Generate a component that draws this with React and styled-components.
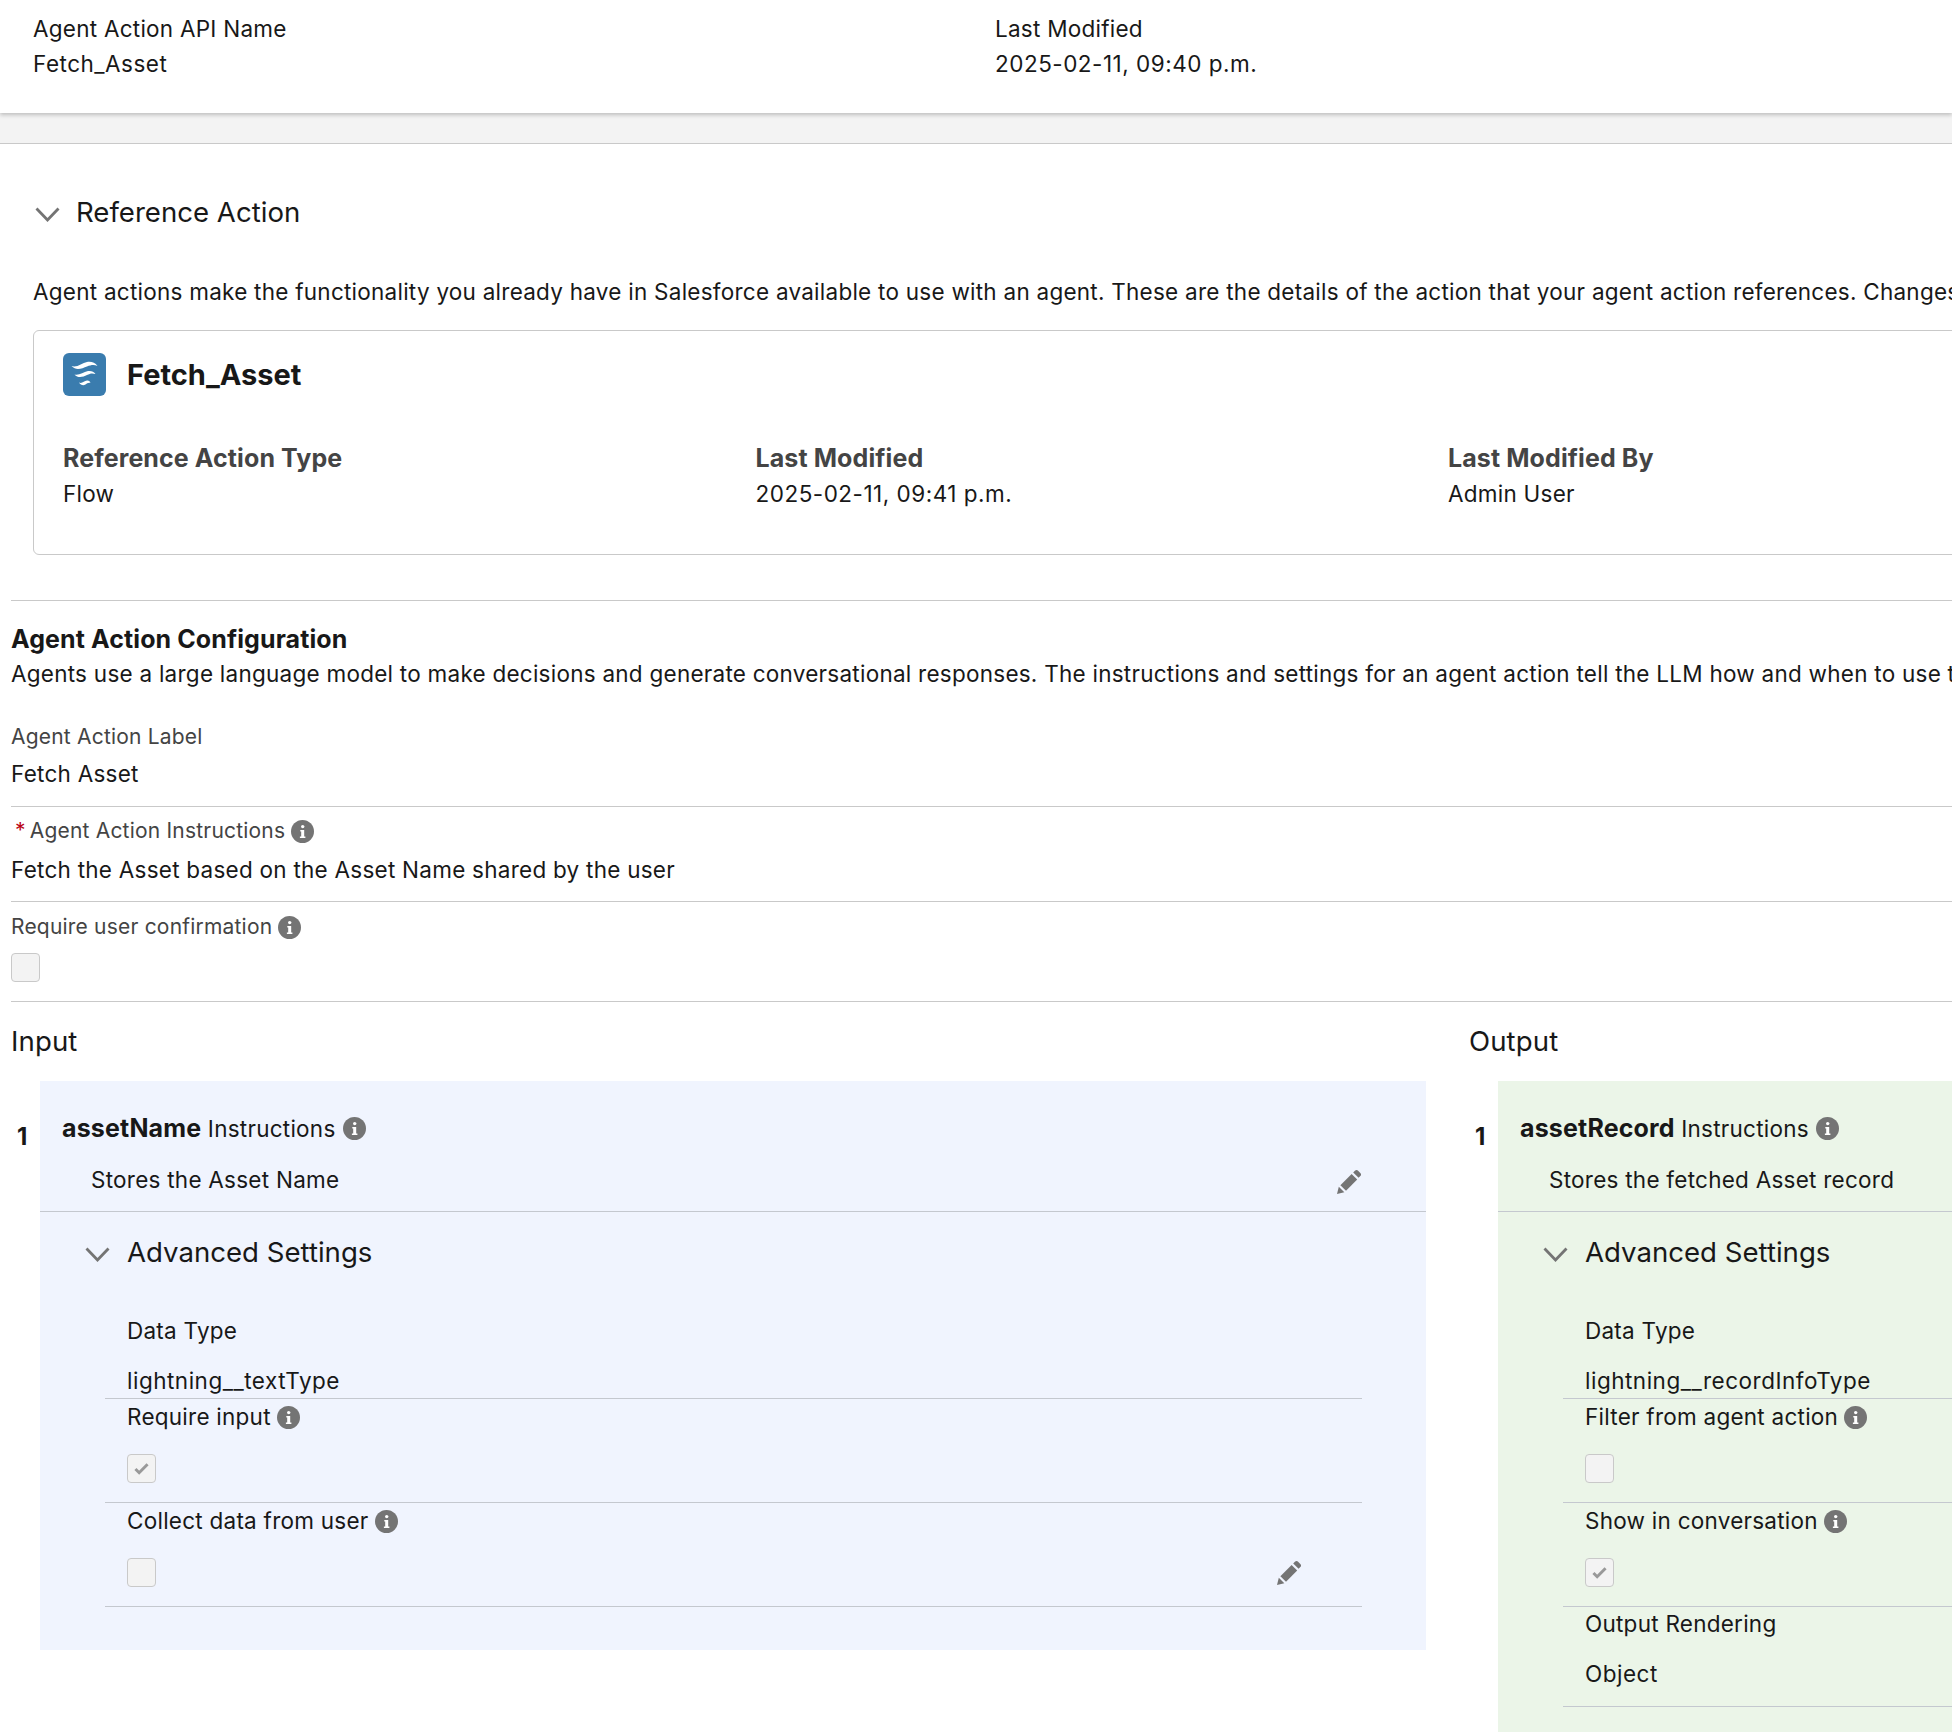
import React from 'react';
import styled, { createGlobalStyle } from 'styled-components';

const GlobalStyle = createGlobalStyle`
    html, body {
        margin: 0;
        padding: 0;
        background: #fff;
    }
    body {
        font-family: Inter, "Liberation Sans", sans-serif;
        font-size: 22.5px;
        letter-spacing: 0.25px;
        line-height: 28px;
        color: #181818;
    }
    * {
        box-sizing: border-box;
    }
`;

const InfoIcon = () => (
    <InfoSvg viewBox="0 0 23 23">
        <circle cx="11.5" cy="11.5" r="11.5" fill="#747474" />
        <circle cx="11.7" cy="6.6" r="1.7" fill="#fff" />
        <path d="M9.3 10h3.9v6.4h1.2v1.6H8.9v-1.6h1.3v-4.8h-.9z" fill="#fff" />
    </InfoSvg>
);

const Chevron = () => (
    <ChevronSvg viewBox="0 0 25 15">
        <path d="M1.5 1.5 12.5 13 23.5 1.5" fill="none" stroke="#747474" strokeWidth="2.8" />
    </ChevronSvg>
);

const Pencil = () => (
    <PencilSvg viewBox="0 0 25 25">
        <path d="M0 25l1.8-7.3 5.5 5.5z" fill="#747474" />
        <path d="M3.4 16.2 14.6 5l5.6 5.6L9 21.8z" fill="#747474" />
        <path d="M16.2 3.4l1.7-1.7c1-1 2.3-1 3.2 0l2.2 2.2c1 1 1 2.2 0 3.2l-1.7 1.7z" fill="#747474" />
    </PencilSvg>
);

const FlowIcon = () => (
    <FlowTile>
        <svg viewBox="0 0 43 43" width="43" height="43">
            <g fill="#fff">
                <path d="M8.5 13C14 15 19 10 24 9c4-.8 8 .5 10.500 4-3.500-1.500-6.500-1-10.500.5-5 2-11 4.500-15.500-.5z" />
                <path d="M11.500 21.500c4.500 1.500 8.500-2.500 13.500-3.500 3-.5 6 .5 7.500 3-3.500-1-5.500-.5-8.500 1-4 2-9 3.500-12.500-.5z" />
                <path d="M16 29.500c3 1.500 5-1.500 8-2 1.500-.2 3 .5 3.500 2.500-2-.5-3.500.5-5.500 1.800-2 1-4.500.2-6-2.300z" />
            </g>
        </svg>
    </FlowTile>
);

const Check = () => (
    <svg viewBox="0 0 29 29" width="27" height="27">
        <path d="M8 15l4 4 9-9" fill="none" stroke="#999" strokeWidth="3.200" />
    </svg>
);

function Settings({ rows }) {
    return (
        <SettingList>
            {rows.map((row) => (
                <SettingRow key={row.label} $top={row.box ? 4 : 3} $bottom={row.bottom}>
                    <SettingLabel>
                        {row.label}
                        {row.info && <InfoIcon />}
                    </SettingLabel>
                    {row.value && <SettingValue $gap={row.gap}>{row.value}</SettingValue>}
                    {row.box && (
                        <BoxLine>
                            <CheckBox>{row.box === 'on' && <Check />}</CheckBox>
                            {row.pencil && <Pencil />}
                        </BoxLine>
                    )}
                </SettingRow>
            ))}
        </SettingList>
    );
}

function ParamPanel({ name, desc, tone, width, height, pencil, rows }) {
    return (
        <Panel $tone={tone} $width={width} $height={height}>
            <PanelHead>
                <ParamTitle>
                    <span>
                        <b>{name}</b> Instructions
                    </span>
                    <InfoIcon />
                </ParamTitle>
                <ParamDesc>
                    {desc}
                    {pencil && <Pencil />}
                </ParamDesc>
            </PanelHead>
            <Advanced>
                <Chevron />
                Advanced Settings
            </Advanced>
            <Settings rows={rows} />
        </Panel>
    );
}

const inputRows = [
    { label: 'Data Type', value: 'lightning__textType', gap: 22, bottom: 3 },
    { label: 'Require input', info: true, box: 'on', bottom: 19 },
    { label: 'Collect data from user', info: true, box: 'off', pencil: true, bottom: 19 },
];

const outputRows = [
    { label: 'Data Type', value: 'lightning__recordInfoType', gap: 22, bottom: 3 },
    { label: 'Filter from agent action', info: true, box: 'off', bottom: 19 },
    { label: 'Show in conversation', info: true, box: 'on', bottom: 19 },
    { label: 'Output Rendering', value: 'Object', gap: 22, bottom: 18 },
];

export default function App() {
    return (
        <Page>
            <GlobalStyle />
            <TopBar>
                <div>
                    <div>Agent Action API Name</div>
                    <TopValue>Fetch_Asset</TopValue>
                </div>
                <div>
                    <div>Last Modified</div>
                    <TopValue>2025-02-11, 09:40 p.m.</TopValue>
                </div>
            </TopBar>
            <Band />

            <ReferenceSection>
                <SectionHead>
                    <Chevron />
                    Reference Action
                </SectionHead>
                <Intro>
                    Agent actions make the functionality you already have in Salesforce available to use with an
                    agent. These are the details of the action that your agent action references. Changes you make
                    to the action can affect your agent.
                </Intro>
                <Card>
                    <CardTitle>
                        <FlowIcon />
                        Fetch_Asset
                    </CardTitle>
                    <MetaGrid>
                        <div>
                            <MetaLabel>Reference Action Type</MetaLabel>
                            <MetaValue>Flow</MetaValue>
                        </div>
                        <div>
                            <MetaLabel>Last Modified</MetaLabel>
                            <MetaValue $wide>2025-02-11, 09:41 p.m.</MetaValue>
                        </div>
                        <div>
                            <MetaLabel>Last Modified By</MetaLabel>
                            <MetaValue>Admin User</MetaValue>
                        </div>
                    </MetaGrid>
                </Card>
            </ReferenceSection>

            <Config>
                <ConfigTitle>Agent Action Configuration</ConfigTitle>
                <Intro $top={7}>
                    Agents use a large language model to make decisions and generate conversational responses. The
                    instructions and settings for an agent action tell the LLM how and when to use the action.
                </Intro>
                <Field $top={37} $bottom={18}>
                    <FieldLabel>Agent Action Label</FieldLabel>
                    <FieldValue $gap={11}>Fetch Asset</FieldValue>
                </Field>
                <Field $top={12} $bottom={17}>
                    <FieldLabel>
                        <Required>*</Required>
                        Agent Action Instructions
                        <InfoIcon />
                    </FieldLabel>
                    <FieldValue $gap={13}>Fetch the Asset based on the Asset Name shared by the user</FieldValue>
                </Field>
                <Field $top={13} $bottom={19}>
                    <FieldLabel>
                        Require user confirmation
                        <InfoIcon />
                    </FieldLabel>
                    <CheckBox $top={14} />
                </Field>
            </Config>

            <Columns>
                <div>
                    <ColumnTitle>Input</ColumnTitle>
                    <ParamRow>
                        <ParamIndex>1</ParamIndex>
                        <ParamPanel
                            name="assetName"
                            desc="Stores the Asset Name"
                            tone="#f0f4fe"
                            width="1386px"
                            height="569px"
                            pencil
                            rows={inputRows}
                        />
                    </ParamRow>
                </div>
                <div>
                    <ColumnTitle>Output</ColumnTitle>
                    <ParamRow>
                        <ParamIndex>1</ParamIndex>
                        <ParamPanel
                            name="assetRecord"
                            desc="Stores the fetched Asset record"
                            tone="#ebf5e8"
                            width="1386px"
                            height="700px"
                            rows={outputRows}
                        />
                    </ParamRow>
                </div>
            </Columns>
        </Page>
    );
}

const Page = styled.div`
    width: 1952px;
    height: 1732px;
    overflow: hidden;
`;

const TopBar = styled.header`
    position: relative;
    display: grid;
    grid-template-columns: 962px 962px;
    height: 113px;
    padding: 15px 0 0 33px;
    background: #fff;
    box-shadow: 0 2px 4px rgba(0, 0, 0, 0.22);
`;

const TopValue = styled.div`
    margin-top: 7px;
    letter-spacing: 0.5px;
`;

const Band = styled.div`
    height: 31px;
    background: #f3f3f3;
    border-bottom: 1px solid #c9c9c9;
`;

const ReferenceSection = styled.section`
    padding-left: 33px;
`;

const SectionHead = styled.h2`
    display: flex;
    align-items: center;
    gap: 16px;
    margin: 50px 0 0;
    padding-left: 2px;
    font-size: 27.6px;
    letter-spacing: 0;
    line-height: 36px;
    font-weight: 400;
    white-space: nowrap;
`;

const ChevronSvg = styled.svg`
    width: 25px;
    height: 15px;
    margin-top: 4px;
    flex-shrink: 0;
`;

const Intro = styled.p`
    margin: ${(props) => props.$top ?? 48}px 0 0;
    white-space: nowrap;
`;

const Card = styled.div`
    width: 2100px;
    height: 225px;
    margin-top: 24px;
    padding: 22px 29px;
    border: 1px solid #c9c9c9;
    border-radius: 6px;
`;

const CardTitle = styled.div`
    display: flex;
    align-items: center;
    gap: 21px;
    font-size: 29px;
    letter-spacing: 0;
    font-weight: 700;
`;

const FlowTile = styled.span`
    display: block;
    width: 43px;
    height: 43px;
    border-radius: 6px;
    background: #3a7cae;
`;

const MetaGrid = styled.div`
    display: grid;
    grid-template-columns: repeat(3, 692.5px);
    margin-top: 48px;
`;

const MetaLabel = styled.div`
    font-weight: 700;
    font-size: 25px;
    letter-spacing: 0.1px;
    color: #444;
`;

const MetaValue = styled.div`
    margin-top: 8px;
    letter-spacing: ${(props) => (props.$wide ? '0.5px' : 'inherit')};
`;

const Config = styled.section`
    margin: 45px 0 0 11px;
    padding-top: 24px;
    border-top: 1px solid #c9c9c9;
`;

const ConfigTitle = styled.h3`
    margin: 0;
    font-size: 25px;
    letter-spacing: 0.1px;
    line-height: 28px;
    font-weight: 700;
`;

const Field = styled.div`
    padding: ${(props) => props.$top}px 0 ${(props) => props.$bottom}px;
    border-bottom: 1px solid #c9c9c9;
`;

const FieldLabel = styled.div`
    display: flex;
    align-items: center;
    gap: 6px;
    height: 24px;
    font-size: 21px;
    letter-spacing: 0.2px;
    line-height: 24px;
    color: #444;
`;

const Required = styled.span`
    margin: 0 -2px 0 4px;
    color: #ba0517;
`;

const FieldValue = styled.div`
    margin-top: ${(props) => props.$gap}px;
`;

const InfoSvg = styled.svg`
    width: 23px;
    height: 23px;
    flex-shrink: 0;
`;

const CheckBox = styled.span`
    display: flex;
    align-items: center;
    justify-content: center;
    width: 29px;
    height: 29px;
    margin-top: ${(props) => props.$top ?? 0}px;
    background: #f3f3f3;
    border: 1px solid #c9c9c9;
    border-radius: 4px;
`;

const Columns = styled.section`
    display: grid;
    grid-template-columns: 1458px 1fr;
    margin: 23px 0 0 11px;
`;

const ColumnTitle = styled.h2`
    margin: 0 0 24px;
    font-size: 27.6px;
    letter-spacing: 0.1px;
    line-height: 32px;
    font-weight: 400;
`;

const ParamRow = styled.div`
    display: flex;
`;

const ParamIndex = styled.div`
    width: 29px;
    flex-shrink: 0;
    margin-top: 42px;
    padding-left: 6px;
    font-size: 24px;
    font-weight: 700;
`;

const Panel = styled.div`
    flex-shrink: 0;
    width: ${(props) => props.$width};
    height: ${(props) => props.$height};
    background: ${(props) => props.$tone};
`;

const PanelHead = styled.div`
    height: 131px;
    padding: 33px 64px 0 22px;
    border-bottom: 1px solid #c4c8cf;
`;

const ParamTitle = styled.div`
    display: flex;
    align-items: center;
    gap: 7px;

    b {
        font-size: 25px;
        letter-spacing: 0.15px;
        font-weight: 700;
    }
`;

const ParamDesc = styled.div`
    display: flex;
    align-items: center;
    justify-content: space-between;
    margin: 23px 0 0 29px;

    ${() => PencilSvg} {
        margin-top: 3px;
    }
`;

const PencilSvg = styled.svg`
    width: 25px;
    height: 25px;
    flex-shrink: 0;
`;

const Advanced = styled.div`
    display: flex;
    align-items: center;
    gap: 17px;
    margin: 22px 0 0 45px;
    font-size: 27.6px;
    letter-spacing: 0;
    line-height: 36px;
`;

const SettingList = styled.div`
    width: 1257px;
    margin: 47px 0 0 65px;
`;

const SettingRow = styled.div`
    padding: ${(props) => props.$top}px 0 ${(props) => props.$bottom}px 22px;
    border-bottom: 1px solid #c4c8cf;

    &:first-child {
        padding-top: 0;
    }
`;

const SettingLabel = styled.div`
    display: flex;
    align-items: center;
    gap: 6px;
`;

const SettingValue = styled.div`
    margin-top: ${(props) => props.$gap}px;
    letter-spacing: 0.5px;
`;

const BoxLine = styled.div`
    display: flex;
    align-items: center;
    justify-content: space-between;
    margin-top: 23px;
    padding-right: 60px;
`;
